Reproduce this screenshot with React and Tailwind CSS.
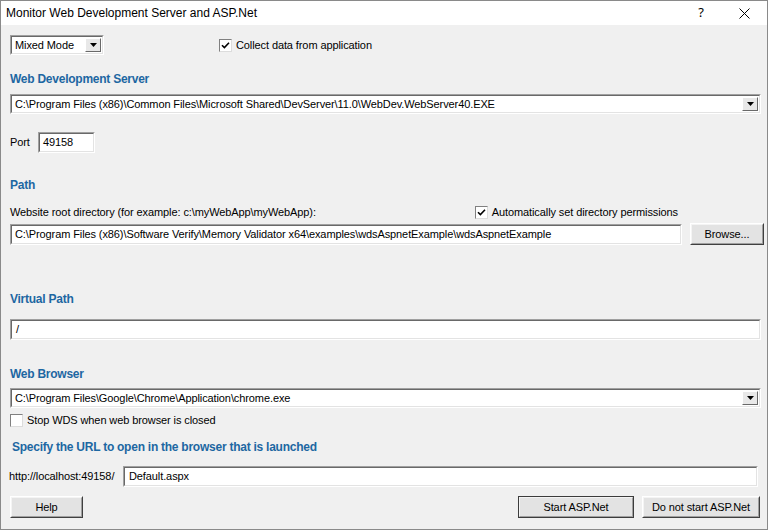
import React from "react";

function Sunken({ className = "", children }) {
  return (
    <div className={"shrink-0 border border-t-[#a0a0a0] border-l-[#a0a0a0] border-b-[#ffffff] border-r-[#ffffff] " + className}>
      <div className="h-full w-full border border-t-[#696969] border-l-[#696969] border-b-[#e3e3e3] border-r-[#e3e3e3] bg-white flex items-center overflow-hidden">
        {children}
      </div>
    </div>
  );
}

function Arrow() {
  return (
    <div className="h-full w-[16px] shrink-0 border border-t-[#ffffff] border-l-[#ffffff] border-b-[#696969] border-r-[#696969] bg-[#e8e8e8] flex items-center justify-center">
      <svg width="7" height="4" viewBox="0 0 7 4">
        <path d="M0 0 L7 0 L3.5 4 Z" fill="#000" />
      </svg>
    </div>
  );
}

function Combo({ className = "", text }) {
  return (
    <Sunken className={className}>
      <span className="flex-1 pl-[3px] whitespace-nowrap">{text}</span>
      <div className="h-full py-[1px] pr-[1px]">
        <Arrow />
      </div>
    </Sunken>
  );
}

function Check({ checked }) {
  return (
    <div className="w-[13px] h-[13px] shrink-0 border border-t-[#808080] border-l-[#808080] border-b-[#dcdcdc] border-r-[#dcdcdc] bg-white flex items-center justify-center">
      {checked && (
        <svg width="9" height="9" viewBox="0 0 9 9">
          <path d="M1 4.2 L3.4 6.6 L8 1.8" stroke="#000" strokeWidth="1.6" fill="none" />
        </svg>
      )}
    </div>
  );
}

function Button({ className = "", children, def }) {
  return (
    <div className={(def ? "border border-[#3c3c3c] " : "border border-[#ffffff] border-b-[#404040] border-r-[#404040] ") + "shrink-0 " + className}>
      <div className="h-full w-full bg-[#e3e3e3] border border-t-[#f4f4f4] border-l-[#f4f4f4] border-b-[#a0a0a0] border-r-[#a0a0a0] flex items-center justify-center">
        {children}
      </div>
    </div>
  );
}

function Heading({ children, className = "" }) {
  return (
    <div className={"font-bold text-[12px] leading-[16px] tracking-[-0.25px] text-[#1d67a2] " + className}>{children}</div>
  );
}

export default function App() {
  return (
    <div className="w-[768px] h-[530px] bg-[#f0f0f0] border border-[#8a8a8a] flex flex-col font-['Liberation_Sans',Arial,sans-serif] text-[11px] tracking-[-0.1px] text-black overflow-hidden">
      <div className="h-[24px] bg-white flex items-center shrink-0 tracking-normal">
        <div className="pl-[5px] text-[12px] font-['Liberation_Sans',sans-serif] flex-1">Monitor Web Development Server and ASP.Net</div>
        <div className="w-[30px] text-center text-[13px] font-['Noto_Sans',sans-serif] mr-[13px]">?</div>
        <div className="w-[30px] flex justify-center mr-[8px]">
          <svg width="11" height="11" viewBox="0 0 11 11">
            <path d="M0.5 0.5 L10.5 10.5 M10.5 0.5 L0.5 10.5" stroke="#000" strokeWidth="1" />
          </svg>
        </div>
      </div>

      <div className="flex-1 pl-[9px] pr-[7px] flex flex-col">
        <div className="mt-[10px] flex items-center h-[20px]">
          <Combo className="w-[94px] h-[20px]" text="Mixed Mode" />
          <div className="ml-[115px] flex items-center gap-[4px]">
            <Check checked />
            <span>Collect data from application</span>
          </div>
        </div>

        <Heading className="mt-[16px]">Web Development Server</Heading>
        <Combo className="mt-[7px] h-[20px] w-[751px]" text="C:\Program Files (x86)\Common Files\Microsoft Shared\DevServer\11.0\WebDev.WebServer40.EXE" />

        <div className="mt-[18px] flex items-center h-[21px]">
          <span className="w-[28px]">Port</span>
          <Sunken className="w-[57px] h-[21px]">
            <span className="pl-[3px]">49158</span>
          </Sunken>
        </div>

        <Heading className="mt-[24px]">Path</Heading>
        <div className="mt-[13px] flex items-center h-[13px]">
          <span className="flex-1">Website root directory (for example: c:\myWebApp\myWebApp):</span>
          <div className="flex items-center gap-[4px] mr-[82px]">
            <Check checked />
            <span>Automatically set directory permissions</span>
          </div>
        </div>
        <div className="mt-[4px] flex items-center h-[22px]">
          <Sunken className="w-[672px] h-[21px]">
            <span className="pl-[3px] whitespace-nowrap">C:\Program Files (x86)\Software Verify\Memory Validator x64\examples\wdsAspnetExample\wdsAspnetExample</span>
          </Sunken>
          <Button className="ml-[8px] w-[74px] h-[22px]">Browse...</Button>
        </div>

        <Heading className="mt-[46px]">Virtual Path</Heading>
        <Sunken className="mt-[12px] w-[751px] h-[21px]">
          <span className="pl-[4px]">/</span>
        </Sunken>

        <Heading className="mt-[26px]">Web Browser</Heading>
        <Combo className="mt-[6px] h-[20px] w-[751px]" text="C:\Program Files\Google\Chrome\Application\chrome.exe" />
        <div className="mt-[6px] flex items-center gap-[4px] h-[13px]">
          <Check />
          <span>Stop WDS when web browser is closed</span>
        </div>

        <Heading className="mt-[12px] ml-[2px]">Specify the URL to open in the browser that is launched</Heading>

        <div className="mt-[11px] flex items-center h-[21px]">
          <span className="w-[114px] -ml-[1px]">http://localhost:49158/</span>
          <Sunken className="w-[635px] h-[21px]">
            <span className="pl-[4px]">Default.aspx</span>
          </Sunken>
        </div>

        <div className="mt-[9px] flex items-center h-[22px]">
          <Button className="w-[73px] h-[22px]">Help</Button>
          <div className="flex-1" />
          <Button def className="w-[116px] h-[22px]">Start ASP.Net</Button>
          <Button className="ml-[8px] w-[118px] h-[22px]">Do not start ASP.Net</Button>
        </div>
      </div>
    </div>
  );
}
